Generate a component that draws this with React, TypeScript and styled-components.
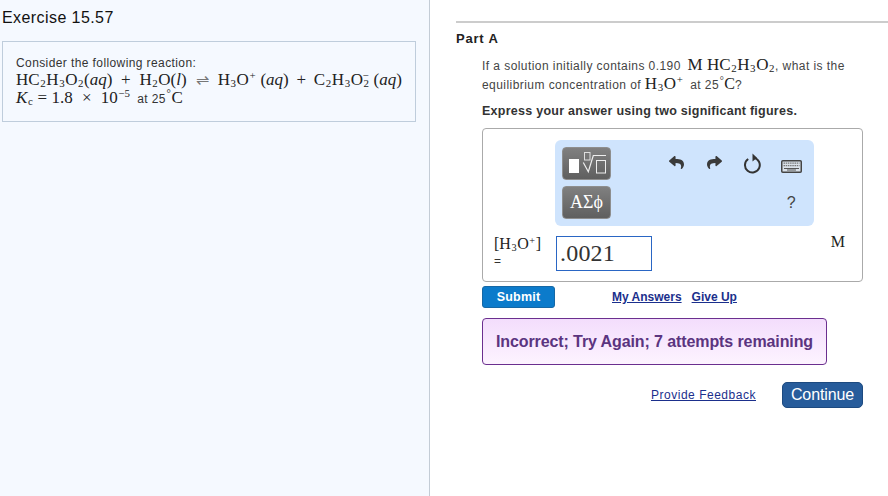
import React from "react";
import styled, { createGlobalStyle } from "styled-components";
import { FaReply, FaShare } from "react-icons/fa";

const Global = createGlobalStyle`
  html, body { margin: 0; padding: 0; background: #fff; }
  body { font-family: "Liberation Sans", Arial, sans-serif; color: #333; }
`;
const Page = styled.div`
  display: flex; width: 888px; height: 496px; overflow: hidden;
`;
const LeftPane = styled.aside`
  box-sizing: border-box; width: 430px; height: 496px; flex: none;
  background: #f5f9ff; border-right: 1px solid #c3ccd6; padding: 9px 13px 0 2px;
`;
const Title = styled.h1`
  margin: 0; font-size: 16px; font-weight: 400; line-height: 18px; color: #111; letter-spacing: 0.42px;
`;
const IntroBox = styled.section`
  box-sizing: border-box; margin-top: 14px; height: 81px;
  border: 1px solid #bfcddc; padding: 13px 13px 0;
  font-size: 12px; line-height: 16px; color: #333; letter-spacing: 0.4px;
`;
const EquationLine = styled.div`
  display: flex; align-items: baseline; height: 18px; line-height: 18px; white-space: nowrap;
  font-size: 12px;
`;
const Mth = styled.span<{ $size?: number }>`
  font-family: "Liberation Serif", "Times New Roman", serif; letter-spacing: 0;
  font-size: ${(p) => p.$size ?? 17}px; color: #222; white-space: nowrap;
  i { font-style: italic; }
  sub, sup { font-size: 0.64em; line-height: 0; margin: 0 0.6px; }
  sub { vertical-align: -0.18em; }
  sup { vertical-align: 0.52em; }
`;
const Op = styled.span<{ $w: number }>`
  display: inline-block; width: ${(p) => p.$w}px; text-align: center;
`;
const Harpoon = styled(Op)`
  font-size: 16px; color: #777;
`;
const StackedCharge = styled.sup`
  margin-left: -7px !important;
`;
const Degree = styled.sup`
  margin: 0 1px 0 0;
`;
const InlineGap = styled.span<{ $l?: number; $r?: number }>`
  margin-left: ${(p) => p.$l ?? 0}px; margin-right: ${(p) => p.$r ?? 0}px;
`;
const RightPane = styled.main`
  box-sizing: border-box; width: 433px; flex: none; margin-left: 26px; padding-top: 21px;
`;
const Rule = styled.div`
  height: 2px; background: #ccc;
`;
const PartTitle = styled.h2`
  margin: 8px 0 0; font-size: 13px; line-height: 16px; font-weight: 700; color: #222;
  letter-spacing: 0.8px; 
`;
const Indented = styled.div`
  margin-left: 26px; width: 381px;
`;
const Prompt = styled.p`
  margin: 9px 0 0; font-size: 12px; line-height: 18px; color: #444; letter-spacing: 0.44px; white-space: nowrap;
`;
const Hint = styled.p`
  margin: 9px 0 0; font-size: 12.5px; line-height: 16px; font-weight: 700; color: #333; letter-spacing: 0.26px;
`;
const AnswerBox = styled.div`
  box-sizing: border-box; margin-top: 9px; height: 154px; padding: 11px 0 0 11px;
  border: 1px solid #aaa; border-radius: 4px; background: #fff; position: relative;
`;
const Toolbar = styled.div`
  box-sizing: border-box; margin-left: 61px; width: 259px; height: 86px;
  background: #cfe4fd; border-radius: 6px; padding: 7px;
  display: flex; justify-content: space-between;
`;
const TemplateCol = styled.div`
  display: flex; flex-direction: column; gap: 6px;
`;
const ToolButton = styled.button`
  width: 49px; height: 33px; padding: 0; border: 1px solid #8e8e8e; border-radius: 4px;
  background: linear-gradient(#808080, #5f5f5f); color: #fff;
  display: flex; align-items: center; justify-content: center;
  font-family: "Liberation Serif", serif; font-size: 18px;
`;
const ActionGrid = styled.div`
  display: grid; grid-template-columns: repeat(4, 38.5px); grid-auto-rows: 33px; row-gap: 6px;
  justify-items: center; align-items: center; margin-right: -4px;
`;
const ActionIcon = styled.span<{ $drop?: number }>`
  display: flex; align-items: center; justify-content: center; color: #3a3a3a;
  margin-top: ${(p) => p.$drop ?? -2}px;
`;
const HelpMark = styled.span`
  grid-column: 4; font-size: 16px; color: #444; margin-left: -1px;
`;
const AnswerRow = styled.div`
  display: flex; margin-top: 10px; align-items: flex-start;
`;
const AnswerLabel = styled.div`
  width: 62px; flex: none;
`;
const LabelMath = styled.div`
  height: 19px; line-height: 16px;
`;
const LabelEq = styled.div`
  font-size: 12px; line-height: 12px; color: #333;
`;
const AnswerInput = styled.div`
  box-sizing: border-box; width: 96px; height: 35px; border: 1px solid #2a66c4;
  font-family: "Liberation Serif", serif; font-size: 24px; line-height: 33px; color: #333;
  padding-left: 3px; letter-spacing: 0.2px;
`;
const Unit = styled.span`
  margin-left: auto; margin-right: 17px; margin-top: -3px;
`;
const ActionRow = styled.div`
  display: flex; align-items: center; margin-top: 4px; height: 22px;
`;
const SubmitButton = styled.button`
  box-sizing: border-box; width: 73px; height: 22px; padding: 0;
  background: #0c7bcb; border: 1px solid #1668a5; border-radius: 3px; color: #fff;
  font: 700 12.5px "Liberation Sans", Arial, sans-serif;  letter-spacing: 0.2px;
`;
const LinkGroup = styled.div`
  display: flex; gap: 10px; margin-left: 57px;
`;
const BoldLink = styled.a`
  font-size: 12px; font-weight: 700; color: #1b2f8c; text-decoration: underline; 
`;
const Feedback = styled.div`
  box-sizing: border-box; margin-top: 10px; width: 345px; height: 47px;
  border: 1px solid #6b2f8f; border-radius: 4px;
  background: linear-gradient(#f3ddfc, #fdf3ff);
  display: flex; align-items: center; justify-content: center;
  font-size: 16px; font-weight: 700; color: #5b3480; white-space: nowrap; letter-spacing: -0.1px;
`;
const FooterRow = styled.div`
  display: flex; align-items: center; justify-content: flex-end; gap: 26px; margin-top: 17px;
`;
const PlainLink = styled.a`
  font-size: 12px; letter-spacing: 0.52px; color: #1b2f8c; text-decoration: underline;
`;
const ContinueButton = styled.button`
  box-sizing: border-box; width: 81px; height: 26px; padding: 0;
  background: #275c9b; border: 1px solid #1d4a80; border-radius: 5px; color: #fff;
  font: 400 16px "Liberation Sans", Arial, sans-serif; letter-spacing: -0.1px;
`;

const TemplateIcon = () => (
  <svg width="47" height="31" viewBox="0 0 47 31" fill="none">
    <rect x="6" y="11" width="10" height="14" fill="#fff" />
    <rect x="21.5" y="4.5" width="5.5" height="7.5" stroke="#ddd" />
    <path d="M20.3 14.5 L25.3 23.7 L30.3 7.5 H43" stroke="#eee" strokeWidth="1.2" />
    <rect x="33.5" y="12.5" width="9" height="12.5" stroke="#eee" />
  </svg>
);
const RefreshIcon = () => (
  <svg width="20" height="22" viewBox="0 0 20 22" fill="none">
    <path d="M5.2 7 A7.4 7.4 0 1 0 10.5 5.8" stroke="#333" strokeWidth="2" />
    <path d="M9.5 1.5 L14 5.8 L9.5 9.5 Z" fill="#333" />
  </svg>
);
const KeyboardIcon = () => (
  <svg width="21" height="13" viewBox="0 0 21 13">
    <rect x="0.75" y="0.75" width="19.5" height="11.5" rx="1" fill="#d9e0e8" stroke="#444" strokeWidth="1.5" />
    <path d="M2.5 3.2 H18.5 M2.5 5.7 H18.5" stroke="#777" strokeWidth="1.2" strokeDasharray="1.5 0.7" />
    <path d="M3 8.5 H18 M6 10 H15" stroke="#555" strokeWidth="1" />
  </svg>
);

export default function App() {
  return (
    <Page>
      <Global />
      <LeftPane>
        <Title>Exercise 15.57</Title>
        <IntroBox>
          <div>Consider the following reaction:</div>
          <EquationLine>
            <Mth>
              HC<sub>2</sub>H<sub>3</sub>O<sub>2</sub>(<i>aq</i>)<Op $w={27}>+</Op>H<sub>2</sub>O(<i>l</i>)
              <Harpoon $w={31}>⇌</Harpoon>H<sub>3</sub>O<sup>+</sup> (<i>aq</i>)<Op $w={25}>+</Op>C<sub>2</sub>H<sub>3</sub>O<sub>2</sub><StackedCharge>−</StackedCharge> (<i>aq</i>)
            </Mth>
          </EquationLine>
          <EquationLine>
            <Mth>
              <i>K</i><sub>c</sub> = 1.8<Op $w={28}>×</Op>10<sup>−5</sup>
            </Mth>
            <InlineGap $l={3}>&nbsp;at 25</InlineGap><Mth $size={17}><Degree>°</Degree>C</Mth>
          </EquationLine>
        </IntroBox>
      </LeftPane>
      <RightPane>
        <Rule />
        <PartTitle>Part A</PartTitle>
        <Indented>
          <Prompt>
            If a solution initially contains 0.190 <InlineGap $l={3}><Mth>M HC<sub>2</sub>H<sub>3</sub>O<sub>2</sub></Mth></InlineGap>, what is the
            <br />
            equilibrium concentration of <InlineGap $r={3}><Mth>H<sub>3</sub>O<sup>+</sup></Mth></InlineGap> at 25<Mth $size={16}><Degree>°</Degree>C</Mth>?
          </Prompt>
          <Hint>Express your answer using two significant figures.</Hint>
          <AnswerBox>
            <Toolbar>
              <TemplateCol>
                <ToolButton aria-label="templates"><TemplateIcon /></ToolButton>
                <ToolButton>ΑΣϕ</ToolButton>
              </TemplateCol>
              <ActionGrid>
                <ActionIcon><FaReply size={15} /></ActionIcon>
                <ActionIcon><FaShare size={15} /></ActionIcon>
                <ActionIcon><RefreshIcon /></ActionIcon>
                <ActionIcon $drop={6}><KeyboardIcon /></ActionIcon>
                <HelpMark>?</HelpMark>
              </ActionGrid>
            </Toolbar>
            <AnswerRow>
              <AnswerLabel>
                <LabelMath><Mth $size={16}>[H<sub>3</sub>O<sup>+</sup>]</Mth></LabelMath>
                <LabelEq>=</LabelEq>
              </AnswerLabel>
              <AnswerInput>.0021</AnswerInput>
              <Unit><Mth $size={16}>M</Mth></Unit>
            </AnswerRow>
          </AnswerBox>
          <ActionRow>
            <SubmitButton>Submit</SubmitButton>
            <LinkGroup>
              <BoldLink>My Answers</BoldLink>
              <BoldLink>Give Up</BoldLink>
            </LinkGroup>
          </ActionRow>
          <Feedback>Incorrect; Try Again; 7 attempts remaining</Feedback>
          <FooterRow>
            <PlainLink>Provide Feedback</PlainLink>
            <ContinueButton>Continue</ContinueButton>
          </FooterRow>
        </Indented>
      </RightPane>
    </Page>
  );
}
